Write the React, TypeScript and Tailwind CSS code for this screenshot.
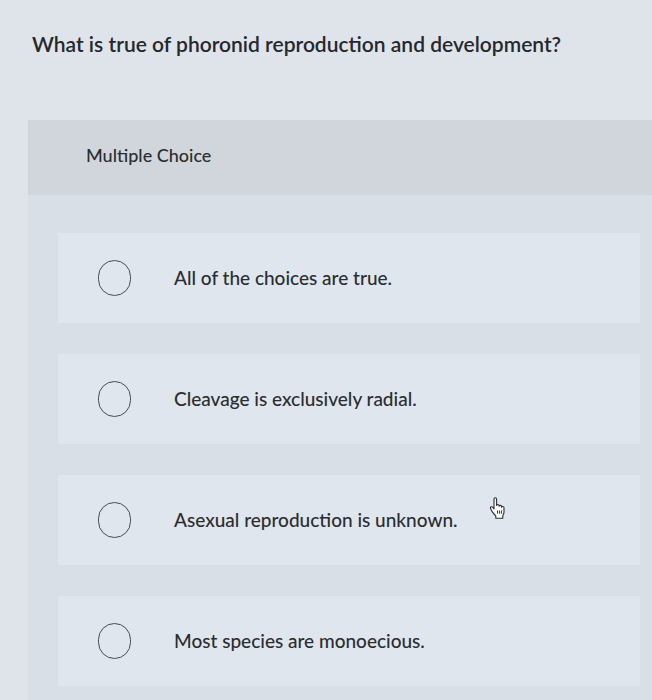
import * as React from "react";

const choices = [
  "All of the choices are true.",
  "Cleavage is exclusively radial.",
  "Asexual reproduction is unknown.",
  "Most species are monoecious.",
];

function HandCursor() {
  return (
    <svg width="18" height="22" viewBox="0 0 18 22" fill="none">
      <path
        d="M5 2.2c0-.9.6-1.4 1.3-1.4s1.3.5 1.3 1.4v6.3c.2-.7.7-1 1.3-1 .7 0 1.2.5 1.2 1.2v.6c.2-.6.7-.9 1.3-.9.7 0 1.2.5 1.2 1.2v.7c.2-.5.7-.8 1.2-.8.7 0 1.2.5 1.2 1.3v4.2c0 1.6-.4 2.7-1.2 3.7v2.6H6.8v-2.3c-1-1-2.2-2.3-3.3-3.8L1.7 11.7c-.4-.6-.3-1.3.2-1.7.5-.4 1.2-.3 1.7.2L5 11.8V2.2z"
        fill="#fff"
        stroke="#2b2e33"
        strokeWidth="1.1"
        strokeLinejoin="round"
      />
      <path d="M8.6 13.5v3.2M10.6 13.5v3.2M12.6 13.5v3.2" stroke="#2b2e33" strokeWidth="1" />
    </svg>
  );
}

function Choice({ text }: { text: string }) {
  return (
    <div className="h-[90px] bg-[#e0e6ed] flex items-center pl-[40px]">
      <div className="w-[33px] h-[36px] rounded-full border-[1.5px] border-[#474c53] shrink-0" />
      <span className="ml-[43px] text-[19px] leading-[24px] font-medium text-[#2b2d31]">{text}</span>
    </div>
  );
}

export default function App() {
  return (
    <div
      className="relative w-[652px] h-[700px] overflow-hidden bg-[#dfe4eb]"
      style={{ fontFamily: "Lato, 'Open Sans', sans-serif" }}
    >
      <h1 className="pl-[32px] pt-[30px] text-[21px] leading-[28px] font-semibold text-[#26282c]">
        What is true of phoronid reproduction and development?
      </h1>

      <div className="mt-[62px] ml-[28px] bg-[#d9dfe6] h-[600px]">
        <div className="h-[75px] bg-[#d1d6dc] pl-[58px] pb-[5px] flex items-center">
          <span className="text-[18px] leading-[22px] font-medium text-[#2b2d31]">Multiple Choice</span>
        </div>
        <div className="pl-[30px] pr-[12px] pt-[38px] flex flex-col gap-[31px]">
          {choices.map((c) => (
            <Choice key={c} text={c} />
          ))}
        </div>
      </div>

      <div className="absolute left-[489px] top-[497px]">
        <HandCursor />
      </div>
    </div>
  );
}
